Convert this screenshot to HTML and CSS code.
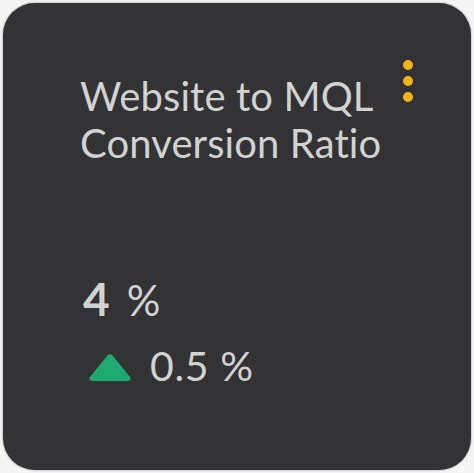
FILE: index.html
```html
<!DOCTYPE html>
<html>
<head>
<meta charset="utf-8">
<link rel="stylesheet" href="styles.css">
</head>
<body>
<div class="card">
  <div class="header">
    <h1 class="title">Website to MQL<br>Conversion Ratio</h1>
    <div class="menu"><span class="dot"></span><span class="dot"></span><span class="dot"></span></div>
  </div>
  <div class="value"><span class="num">4</span><span class="unit">%</span></div>
  <div class="change">
    <svg class="tri" width="44" height="29" viewBox="0 0 44 29"><path d="M19.5 2.5 Q22 0 24.5 2.5 L42 24 Q44 28 39 28 L5 28 Q0 28 2 24 Z" fill="#1faa72"/></svg>
    <span class="delta">0.5 %</span>
  </div>
</div>
</body>
</html>
```
FILE: styles.css
```css
html, body { margin: 0; padding: 0; background: #f4f4f4; }
body { width: 474px; height: 473px; overflow: hidden; }
.card {
  margin: 3px;
  width: 468px;
  height: 467px;
  box-sizing: border-box;
  background: #333335;
  border-radius: 32px;
  box-shadow: 0 0 2px rgba(0,0,0,0.5);
  padding: 70px 0 0 77px;
  font-family: "Lato", "Open Sans", sans-serif;
  color: #d2d2d2;
}
.header { display: flex; align-items: flex-start; }
.title { margin: 0; font-weight: 400; font-size: 40px; line-height: 47px; letter-spacing: 0.1px; }
.menu { display: flex; flex-direction: column; gap: 6px; margin: -13px 0 0 22px; }
.dot { width: 10px; height: 10px; border-radius: 50%; background: #f4b414; display: block; }
.value { margin-top: 110px; display: flex; align-items: baseline; line-height: 44px; }
.num { font-size: 46px; font-weight: 700; padding-left: 3px; }
.unit { font-size: 42px; margin-left: 17px; }
.change { margin-top: 22px; display: flex; align-items: flex-end; padding-left: 8px; }
.tri { display: block; margin-bottom: 6px; }
.delta { font-size: 41px; margin-left: 18px; line-height: 44px; letter-spacing: 0.6px; }
```
